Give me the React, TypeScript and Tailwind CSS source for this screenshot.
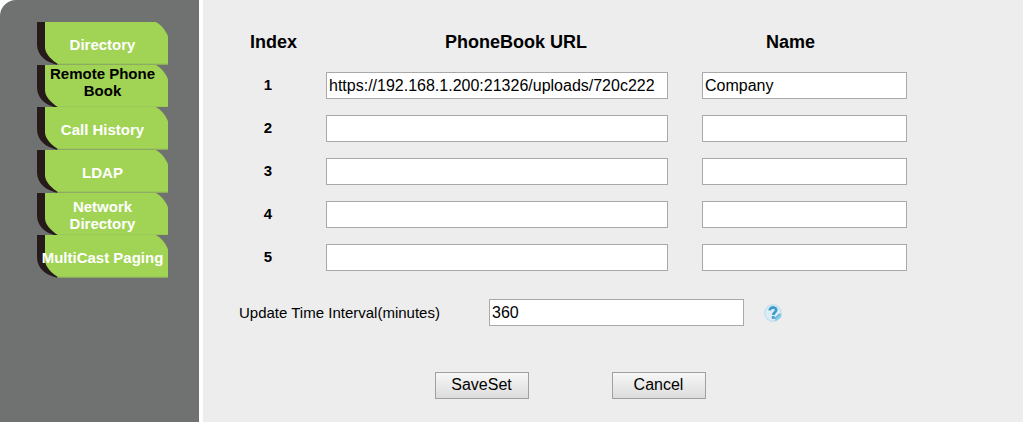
import { useState } from "react";

const tabs = [
  "Directory",
  "Remote Phone Book",
  "Call History",
  "LDAP",
  "Network Directory",
  "MultiCast Paging",
];

const initialEntries = [
  { url: "https://192.168.1.200:21326/uploads/720c222", name: "Company" },
  { url: "", name: "" },
  { url: "", name: "" },
  { url: "", name: "" },
  { url: "", name: "" },
];

const fieldClass =
  "block h-[27px] w-full border border-[#a9a9a9] bg-white px-[2px] text-[16px] leading-[24px] text-black outline-none focus:border-[#5b8bd0]";

const buttonClass =
  "h-[27px] w-[94px] border border-[#a0a0a0] bg-linear-to-b from-[#f7f7f7] to-[#dcdcdc] pb-[2px] text-[16px] leading-[24px] text-black";

function TabShape() {
  return (
    <svg
      className="absolute inset-0 h-full w-full"
      viewBox="0 0 131 42"
      preserveAspectRatio="none"
      aria-hidden="true"
    >
      <path d="M0 0H12V28L23 42H20C9 40 0 33 0 22Z" fill="#261a1a" />
      <path d="M8 0H119C124 3 128 7 131 14V42H22C15 38 8 31 8 25Z" fill="#a1d354" />
      <path d="M20 41.5H131" stroke="#8ba765" strokeWidth="1" />
    </svg>
  );
}

function HelpIcon() {
  return (
    <svg className="h-[18px] w-[18px]" viewBox="0 0 18 18" aria-hidden="true">
      <circle cx="9" cy="9" r="8.2" fill="#deedf4" stroke="#c3e1ee" strokeWidth="1.4" />
      <path d="M10 16.8L17.8 9.2L16.8 13.5L13 16.5Z" fill="#8bcbea" />
      <path
        d="M5.6 6.4C6 3.9 8 3.3 9.8 3.6C12.6 4.1 13 6.7 11 8.2C9.8 9.2 9.3 9.6 9.3 11"
        fill="none"
        stroke="#3a9bd0"
        strokeWidth="2.8"
      />
      <path d="M7.8 12.2H10.8V14.8H7.8Z" fill="#3a9bd0" />
      <path d="M10.6 14.8L16 9.8" stroke="#62b6e0" strokeWidth="1.8" />
    </svg>
  );
}

export default function App() {
  const [entries, setEntries] = useState(initialEntries);
  const [interval, setIntervalValue] = useState("360");

  const update = (index: number, key: "url" | "name", value: string) =>
    setEntries(entries.map((entry, i) => (i === index ? { ...entry, [key]: value } : entry)));

  const cancel = () => {
    setEntries(initialEntries);
    setIntervalValue("360");
  };

  return (
    <div className="flex min-h-screen bg-white font-['Liberation_Sans',Arial,sans-serif] text-black">
      <nav className="w-[199px] shrink-0 rounded-tl-[16px] bg-[#707271] pt-[22px] pl-[37px]">
        <ul className="grid h-[256px] w-[131px] auto-rows-fr">
          {tabs.map((tab) => (
            <li key={tab} className="relative">
              <TabShape />
              <a
                href="#"
                aria-current={tab === "Remote Phone Book" ? "page" : undefined}
                className={`relative flex h-full items-center justify-center px-1 text-center text-[15px] leading-[17px] font-bold ${
                  tab === "Remote Phone Book" ? "pb-[8px] text-black" : "pt-[2px] text-white"
                }`}
              >
                {tab}
              </a>
            </li>
          ))}
        </ul>
      </nav>

      <main className="ml-1 min-w-0 flex-1 bg-[#ededed] pt-5 pr-[116px] pl-9">
        <form onSubmit={(event) => event.preventDefault()}>
          <table className="w-full table-fixed border-collapse">
            <colgroup>
              <col className="w-[87px]" />
              <col />
              <col className="w-[205px]" />
            </colgroup>
            <thead>
              <tr className="h-11 text-[18px] leading-5">
                <th scope="col" className="pr-[18px]">Index</th>
                <th scope="col" className="pl-1">PhoneBook URL</th>
                <th scope="col" className="pr-7">Name</th>
              </tr>
            </thead>
            <tbody>
              {entries.map((entry, i) => (
                <tr key={i} className="h-[43px]">
                  <th scope="row" className="pr-[29px] text-[15px]">{i + 1}</th>
                  <td className="pr-[34px]">
                    <input
                      type="text"
                      aria-label={`PhoneBook URL ${i + 1}`}
                      className={fieldClass}
                      value={entry.url}
                      onChange={(event) => update(i, "url", event.target.value)}
                    />
                  </td>
                  <td>
                    <input
                      type="text"
                      aria-label={`Name ${i + 1}`}
                      className={fieldClass}
                      value={entry.name}
                      onChange={(event) => update(i, "name", event.target.value)}
                    />
                  </td>
                </tr>
              ))}
            </tbody>
          </table>

          <div className="mt-5 flex items-center">
            <label htmlFor="interval" className="w-[250px] shrink-0 text-[15px] leading-5">
              Update Time Interval(minutes)
            </label>
            <div className="w-[255px]">
              <input
                id="interval"
                type="text"
                className={fieldClass}
                value={interval}
                onChange={(event) => setIntervalValue(event.target.value)}
              />
            </div>
            <button type="button" aria-label="Help" className="ml-5">
              <HelpIcon />
            </button>
          </div>

          <div className="mt-[46px] flex justify-center gap-[83px] pr-[6px]">
            <button type="submit" className={buttonClass}>SaveSet</button>
            <button type="button" className={buttonClass} onClick={cancel}>Cancel</button>
          </div>
        </form>
      </main>
    </div>
  );
}
